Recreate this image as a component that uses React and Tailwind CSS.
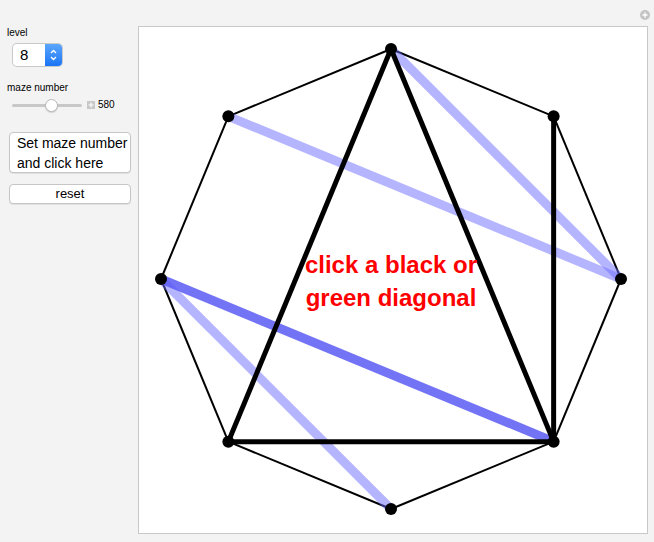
import React from "react";

const C = { x: 391, y: 279, r: 230 };
const pts = Array.from({ length: 8 }, (_, i) => {
  const a = (-90 + i * 45) * (Math.PI / 180);
  return [C.x + C.r * Math.cos(a), C.y + C.r * Math.sin(a)];
});
// 0 top,1 upper-right,2 right,3 lower-right,4 bottom,5 lower-left,6 left,7 upper-left

function Diagram() {
  const L = (a, b, props) => (
    <line x1={pts[a][0]} y1={pts[a][1]} x2={pts[b][0]} y2={pts[b][1]} {...props} />
  );
  return (
    <svg width="508" height="506" viewBox="139 27 508 506" className="block">
      {pts.map((p, i) => L(i, (i + 1) % 8, { key: "e" + i, stroke: "#000", strokeWidth: 2 }))}
      {L(0, 2, { stroke: "#6b6bff", strokeOpacity: 0.5, strokeWidth: 9 })}
      {L(7, 2, { stroke: "#6b6bff", strokeOpacity: 0.5, strokeWidth: 9 })}
      {L(6, 4, { stroke: "#6b6bff", strokeOpacity: 0.5, strokeWidth: 9 })}
      {L(6, 3, { stroke: "#5a5af5", strokeOpacity: 0.85, strokeWidth: 9 })}
      {L(0, 5, { stroke: "#000", strokeWidth: 5 })}
      {L(0, 3, { stroke: "#000", strokeWidth: 5 })}
      {L(5, 3, { stroke: "#000", strokeWidth: 5 })}
      {L(1, 3, { stroke: "#000", strokeWidth: 5 })}
      {pts.map((p, i) => (
        <circle key={"c" + i} cx={p[0]} cy={p[1]} r="6" fill="#000" />
      ))}
      <text x="391" y="273" textAnchor="middle" fill="#ff0000" fontFamily="'Liberation Sans', Arial, sans-serif" fontWeight="700" fontSize="24">
        click a black or
      </text>
      <text x="391" y="306" textAnchor="middle" fill="#ff0000" fontFamily="'Liberation Sans', Arial, sans-serif" fontWeight="700" fontSize="24">
        green diagonal
      </text>
    </svg>
  );
}

export default function App() {
  return (
    <div className="relative w-[654px] h-[542px] bg-[#f3f3f3] flex font-['Liberation_Sans',Arial,sans-serif] text-black overflow-hidden">
      <div className="w-[138px] shrink-0 flex flex-col pl-[7px] pt-[27px]">
        <div className="text-[10px] leading-[12px]">level</div>
        <div className="mt-[5px] ml-[6px] w-[49px] h-[22px] flex rounded-[4px] bg-white shadow-[0_0_0_1px_#c9c9c9]">
          <div className="flex-1 pl-[7px] text-[15px] leading-[22px]">8</div>
          <div className="w-[17px] h-full rounded-r-[4px] bg-gradient-to-b from-[#5aa6fc] to-[#1a74f5] flex flex-col items-center justify-center">
            <svg width="9" height="16" viewBox="0 0 9 16">
              <path d="M2 6 L4.5 3.5 L7 6" fill="none" stroke="#fff" strokeWidth="1.4" />
              <path d="M2 10 L4.5 12.5 L7 10" fill="none" stroke="#fff" strokeWidth="1.4" />
            </svg>
          </div>
        </div>
        <div className="mt-[16px] text-[10px] leading-[12px]">maze number</div>
        <div className="mt-[4px] flex items-center h-[14px]">
          <div className="relative ml-[5px] w-[70px] h-[3px] rounded-full bg-[#c8c8c8]">
            <div className="absolute left-[33px] top-[-5px] w-[13px] h-[13px] rounded-full bg-white border border-[#b8b8b8] shadow-[0_1px_1px_rgba(0,0,0,0.15)]" />
          </div>
          <div className="ml-[5px] w-[8px] h-[8px] bg-[#c8c8c8] flex items-center justify-center">
            <svg width="6" height="6" viewBox="0 0 6 6">
              <path d="M3 0.5 V5.5 M0.5 3 H5.5" stroke="#fff" strokeWidth="1.2" />
            </svg>
          </div>
          <div className="ml-[3px] text-[10px] leading-[12px]">580</div>
        </div>
        <div className="mt-[20px] ml-[2px] w-[122px] h-[41px] rounded-[4px] bg-white border border-[#c6c6c6] shadow-[0_1px_0_rgba(0,0,0,0.08)] pl-[7px] pt-[0px] text-[14px] leading-[20px]">
          Set maze number
          <br />
          and click here
        </div>
        <div className="mt-[11px] ml-[2px] w-[122px] h-[20px] rounded-[4px] bg-white border border-[#c6c6c6] shadow-[0_1px_0_rgba(0,0,0,0.08)] text-[13px] leading-[18px] text-center">
          reset
        </div>
      </div>
      <div className="mt-[26px] w-[510px] h-[508px] bg-white border border-[#c8c8c8] shrink-0">
        <Diagram />
      </div>
      <div className="absolute right-[4px] top-[10px] w-[10px] h-[10px] rounded-full bg-[#c4c4c4] flex items-center justify-center">
        <svg width="6" height="6" viewBox="0 0 6 6">
          <path d="M3 0.5 V5.5 M0.5 3 H5.5" stroke="#fff" strokeWidth="1.4" />
        </svg>
      </div>
    </div>
  );
}
